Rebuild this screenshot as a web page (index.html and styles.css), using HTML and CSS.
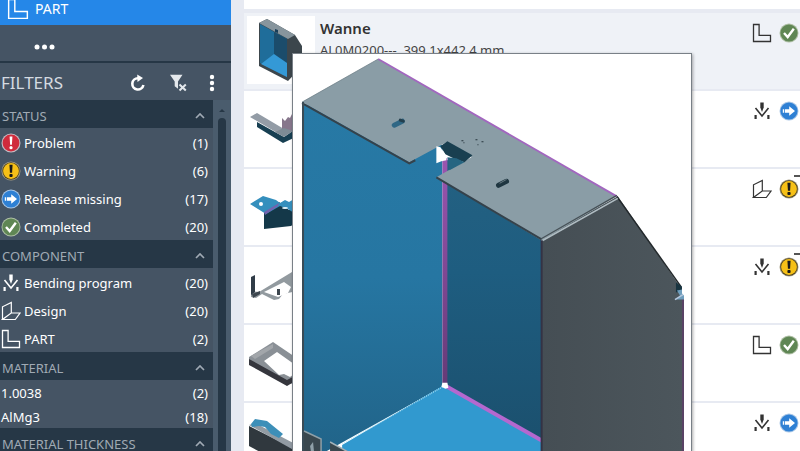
FILE: index.html
```html
<!DOCTYPE html>
<html lang="en">
<head>
<meta charset="utf-8">
<title>Parts</title>
<link rel="stylesheet" href="styles.css">
</head>
<body>
<svg class="defs" aria-hidden="true">
  <defs>
    <linearGradient id="g-left" x1="0" y1="0" x2="0" y2="1"><stop offset="0" stop-color="#2779a5"/><stop offset=".5" stop-color="#2676a2"/><stop offset="1" stop-color="#216489"/></linearGradient>
    <linearGradient id="g-back" x1="0" y1="0" x2="0" y2="1"><stop offset="0" stop-color="#246182"/><stop offset=".4" stop-color="#1e5d80"/><stop offset="1" stop-color="#1b506e"/></linearGradient>
    <linearGradient id="g-side" x1="0" y1="0" x2="1" y2="0"><stop offset="0" stop-color="#454e54"/><stop offset="1" stop-color="#4c565c"/></linearGradient>
    <linearGradient id="g-post" x1="0" y1="0" x2="0" y2="1"><stop offset="0" stop-color="#9a55b0"/><stop offset="1" stop-color="#653a77"/></linearGradient>
  </defs>
  <symbol id="problem" viewBox="0 0 20 20"><circle cx="10" cy="10" r="9.5" fill="#c4bcc4"/><circle cx="10" cy="10" r="8.4" fill="#d02b3c"/><path d="M8.6 3.5h2.8l-.5 8.2H9.100z" fill="#fff"/><circle cx="10" cy="14.700" r="1.600" fill="#fff"/></symbol>
  <symbol id="warning" viewBox="0 0 20 20"><circle cx="10" cy="10" r="9.500" fill="#a79f86"/><circle cx="10" cy="10" r="8.700" fill="#4a4020"/><circle cx="10" cy="10" r="7.900" fill="#f6c017"/><path d="M8.400 3.800h3.200l-.5 7.900H8.900z" fill="#191919"/><rect x="8.400" y="13" width="3.200" height="3" rx="1" fill="#191919"/></symbol>
  <symbol id="release" viewBox="0 0 20 20"><circle cx="10" cy="10" r="9.500" fill="#a9c6e6"/><circle cx="10" cy="10" r="8.600" fill="#2e80d4"/><path d="M3.800 8.300h1.200v3.400H3.800zM5.800 8.300h4.400V5.200l5.800 4.800-5.800 4.800v-3.100H5.800z" fill="#fff"/></symbol>
  <symbol id="completed" viewBox="0 0 20 20"><circle cx="10" cy="10" r="9.500" fill="#aebfa5"/><circle cx="10" cy="10" r="8.600" fill="#5f8654"/><path d="M5 10l3.700 4L14.800 5.800" fill="none" stroke="#fff" stroke-width="2.400"/></symbol>
  <symbol id="part" viewBox="0 0 20 20"><path d="M1.500 1.500h5.600v10.800h11.400v6.200h-17z" fill="none" stroke="currentColor" stroke-width="1.300"/></symbol>
  <symbol id="design" viewBox="0 0 20 20"><path d="M1.500 18.500V5.800L10.300 1.500V12L1.500 18.500h12.800L19 12h-8.700" fill="none" stroke="currentColor" stroke-width="1.200"/></symbol>
  <symbol id="bend" viewBox="0 0 20 20"><path d="M8.300 1.500h3.400v5L10 11 8.300 6.500z" fill="currentColor"/><path d="M3.500 7l6.500 8 6.500-8" fill="none" stroke="currentColor" stroke-width="1.600"/><path d="M2.500 14h2.200v4H2.500zM15.300 14h2.200v4h-2.200z" fill="currentColor"/></symbol>
  <symbol id="chevron" viewBox="0 0 10 6"><path d="M1 5l4-4 4 4" fill="none" stroke="currentColor" stroke-width="1.700"/></symbol>
</svg>

<div class="app">
  <aside class="sidebar">
    <button class="nav-item"><svg class="nav-icon"><use href="#part"/></svg>PART</button>
    <button class="more" aria-label="More"><svg width="22" height="6" viewBox="0 0 22 6" fill="#fff"><circle cx="3" cy="3" r="2.500"/><circle cx="10.500" cy="3" r="2.500"/><circle cx="18" cy="3" r="2.500"/></svg></button>
    <header class="filters-head">
      <h2>FILTERS</h2>
      <button aria-label="Reset"><svg width="18" height="18" viewBox="0 0 18 18"><path d="M9 4.300A5.600 5.600 0 1 0 14.400 11" fill="none" stroke="#fff" stroke-width="2.600"/><path d="M8.200.5l5.800 3.500-5.500 4z" fill="#fff"/></svg></button>
      <button aria-label="Clear filters"><svg width="18" height="18" viewBox="0 0 18 18"><path d="M1 .8h12.500L9 7.500v7.200l-3.300-2.500V7.500z" fill="#e4e8ec"/><path d="M10.500 10.500l6.300 6M16.800 10.500l-6.300 6" stroke="#e4e8ec" stroke-width="2"/></svg></button>
      <button aria-label="Options"><svg width="6" height="18" viewBox="0 0 6 18" fill="#fff"><circle cx="3" cy="3" r="2.200"/><circle cx="3" cy="9" r="2.200"/><circle cx="3" cy="15" r="2.200"/></svg></button>
    </header>
    <div class="filters-body">
      <div class="groups">
        <section>
          <button class="group-head">STATUS<svg><use href="#chevron"/></svg></button>
          <button class="row"><svg><use href="#problem"/></svg><span>Problem</span><span class="count">(1)</span></button>
          <button class="row"><svg><use href="#warning"/></svg><span>Warning</span><span class="count">(6)</span></button>
          <button class="row"><svg><use href="#release"/></svg><span>Release missing</span><span class="count">(17)</span></button>
          <button class="row"><svg><use href="#completed"/></svg><span>Completed</span><span class="count">(20)</span></button>
        </section>
        <section>
          <button class="group-head">COMPONENT<svg><use href="#chevron"/></svg></button>
          <button class="row"><svg><use href="#bend"/></svg><span>Bending program</span><span class="count">(20)</span></button>
          <button class="row"><svg><use href="#design"/></svg><span>Design</span><span class="count">(20)</span></button>
          <button class="row"><svg><use href="#part"/></svg><span>PART</span><span class="count">(2)</span></button>
        </section>
        <section>
          <button class="group-head">MATERIAL<svg><use href="#chevron"/></svg></button>
          <button class="row compact"><span>1.0038</span><span class="count">(2)</span></button>
          <button class="row compact"><span>AlMg3</span><span class="count">(18)</span></button>
        </section>
        <section>
          <button class="group-head">MATERIAL THICKNESS<svg><use href="#chevron"/></svg></button>
        </section>
      </div>
      <div class="scroll"><svg width="8" height="5" viewBox="0 0 8 5"><path d="M1 4l3-3 3 3z" fill="#263746"/></svg><div class="thumb"></div></div>
    </div>
  </aside>

  <main class="content">
    <ul class="list">
      <li class="card first"></li>
      <li class="card selected">
        <svg class="shot" viewBox="0 0 68 68"><rect width="68" height="68" fill="#fff"/><path d="M12 7l8-4 28 16 7 11v20l-14 15L12 50z" fill="#3c464c"/><path d="M12 7l8-4 28 16-7 4z" fill="#87959d"/><path d="M13 8l27 15v38L13 47z" fill="#1f6d9a"/><path d="M27 16l13 7v27l-13-9z" fill="#1b4c6b"/><path d="M14 48l13-10 13 9v14z" fill="#3499d6"/><path d="M28 13l3 1v3l-3-1z" fill="#183e5a"/></svg>
        <div class="info"><h3>Wanne</h3><p>AL0M0200---&nbsp; 399.1x442.4 mm</p></div>
        <span class="state"><svg><use href="#part"/></svg><svg><use href="#completed"/></svg></span>
      </li>
      <li class="card">
        <svg class="shot" viewBox="0 0 68 68"><path d="M10 28v5l26 16 17-8V32L37 43z" fill="#173f52"/><path d="M3 23l7-4 27 16-5 5z" fill="#939ca6"/><path d="M35 24l3 3 3-4 2 1 2-4 8-3v18l-12 4-6-3z" fill="#87778c"/><path d="M28 38l9-4 9 3-9 6z" fill="#7d8b95"/></svg>
        <div class="info"></div>
        <span class="state"><svg><use href="#bend"/></svg><svg><use href="#release"/></svg></span>
      </li>
      <li class="card">
        <svg class="shot" viewBox="0 0 68 68"><path d="M17 38l15-8 10 8h14v7l-12 9-27 3z" fill="#143849"/><path d="M3 32l13-8 13 4 4 3 5-3 4 2 5-3 10 4v9l-10 1-6-4-8-3-14 8z" fill="#348fbd"/><path d="M17 40l15-9-1 3-13 9z" fill="#7263ad"/><circle cx="14" cy="32" r="2" fill="#fff"/><ellipse cx="38" cy="36" rx="3" ry="1" fill="#e4f4fa"/></svg>
        <div class="info"></div>
        <span class="state flagged"><svg><use href="#design"/></svg><svg><use href="#warning"/></svg></span>
      </li>
      <li class="card">
        <svg class="shot" viewBox="0 0 68 68"><path d="M4 41l8 1L45 22l10 6v12L36 44l-4 5-5 1-12-6-6 4-5-1z" fill="#929a9f"/><path d="M4 27l4-2v17l-4 3z" fill="#303c47"/><path d="M17 42l20-10 7 5-3 6-10 4z" fill="#fff"/><path d="M30 39h3v6h-3zM5 44l8-3v3l-7 4z" fill="#3d464e"/></svg>
        <div class="info"></div>
        <span class="state flagged"><svg><use href="#bend"/></svg><svg><use href="#warning"/></svg></span>
      </li>
      <li class="card">
        <svg class="shot" viewBox="0 0 68 68"><path d="M2 29l24-15 31 21v18l-15 3L2 34z" fill="#8a9096"/><path d="M2 31l38 21 15-8v5l-15 9L2 37z" fill="#35363d"/><path d="M17 33l13-9 24 17-11 8-6-3-5 1z" fill="#fff"/><path d="M4 28l22-12v4L8 31z" fill="#a2a6aa"/></svg>
        <div class="info"></div>
        <span class="state"><svg><use href="#part"/></svg><svg><use href="#completed"/></svg></span>
      </li>
      <li class="card">
        <svg class="shot" viewBox="0 0 68 68"><path d="M2 20l50 25v22L2 40z" fill="#30383e"/><path d="M2 19l6-2 44 23v7z" fill="#929ba3"/><path d="M4 18l4-5 12 2 16 13-4 4-8-4-6-7-6-1-7 1z" fill="#3d8fb8"/></svg>
        <div class="info"></div>
        <span class="state"><svg><use href="#bend"/></svg><svg><use href="#release"/></svg></span>
      </li>
    </ul>

    <div class="preview">
      <svg viewBox="293 54 397 397" role="img" aria-label="Wanne preview">
        <path d="M302 103L442 145V386L325 451H302z" fill="url(#g-left)"/>
        <path d="M444 158l98 60v224L444 385z" fill="url(#g-back)"/>
        <path d="M444 384L342 444V451H542V439z" fill="#3199cf"/>
        <path d="M444 385L342 443" stroke="#bceafa" stroke-dasharray="1 1"/>
        <path d="M445 385L542 440" stroke="#b468cf" stroke-width="4"/>
        <path d="M442 158h5v226h-5z" fill="url(#g-post)"/>
        <path d="M442 382h5l1 5-3 1-4-2z" fill="#fff"/>
        <path d="M541 238L617 196L679 286L683 300V451H541z" fill="url(#g-side)"/>
        <path d="M616 196L680 286" stroke="#22282b" stroke-width="1.500"/>
        <path d="M541 238V451" stroke="#343345" stroke-width="2"/>
        <path d="M682 297V451" stroke="#594365" stroke-width="2"/>
        <path d="M302 102L378 59L616 196L541 240L436 177L471 157L446 142L409 162z" fill="#8a9da6"/>
        <path d="M378 59L616 196" stroke="#a267bf" stroke-width="1.800"/>
        <path d="M302 102L378 59" stroke="#687a82" stroke-width=".7"/>
        <path d="M302 103L409 163L415 160M436 177L541 239" fill="none" stroke="#35424b" stroke-width="2"/>
        <path d="M541 238L616 195" stroke="#475157" stroke-width="1.200"/><path d="M542 240L617 198" stroke="#b0bdc3" stroke-width="1.600"/>
        <path d="M303 102V451" stroke="#3b4b55" stroke-width="2"/>
        <path d="M440 146l7-5 25 14-8 7-9-3-10-5z" fill="#193f50"/>
        <path d="M447 157l9 1 8 4-15 8z" fill="#266581"/>
        <path d="M436 146l4 1 6 9v4l-5 1-5 2z" fill="#fff"/>
        <path d="M394 125l8-4" stroke="#2f6785" stroke-width="5" stroke-linecap="round"/><path d="M400 120l3 1" stroke="#243f4d" stroke-width="3" stroke-linecap="round"/>
        <path d="M498 185l8-4" stroke="#1f3641" stroke-width="5" stroke-linecap="round"/><path d="M499 183l7-4" stroke="#687b83" stroke-width="1"/>
        <path d="M461 140h2v1h-2zM475 139h2v1h-2zM481 141h2v1h-2zM477 144h1v1h-1zM463 142h1v1h-1z" fill="#26353d"/>
        <path d="M675 282l6 4v4l-6 2z" fill="#183440"/><path d="M676 290l5-1v4l2 2v4h-8l4-4z" fill="#6f9ebd"/><path d="M674 299l8-5" stroke="#b6c7dd" stroke-width="1.500"/>
        <path d="M304 430l17 8v13h-17z" fill="#39474e"/><path d="M304 430l17 8v13" fill="none" stroke="#8fa0a8" stroke-width="1.500"/><path d="M310 445l3-4 1 10h-3z" fill="#8fa0a8"/>
        <path d="M330 441l17 9v1h-17z" fill="#39474e"/><path d="M330 441l18 10" stroke="#a2b1b8" stroke-width="1.500"/>
      </svg>
    </div>
  </main>
</div>
</body>
</html>
```
FILE: styles.css
```css
* { box-sizing: border-box; }
body { margin: 0; font-family: "Noto Sans", "Open Sans", sans-serif; font-size: 13px; color: #fff; }
button { border: 0; margin: 0; padding: 0; background: none; color: inherit; font: inherit; text-align: left; display: flex; align-items: center; }
h2, h3, p, ul { margin: 0; padding: 0; font-weight: 400; }
.defs { position: absolute; width: 0; height: 0; }

.app { display: flex; height: 100vh; overflow: hidden; }
.sidebar { width: 231px; flex: none; display: flex; flex-direction: column; background: #455464; overflow: hidden; }
.nav-item { height: 25px; flex: none; padding: 0 0 8px 7px; gap: 6px; background: #2587e8; font-size: 14px; overflow: hidden; }
.nav-icon { width: 22px; height: 22px; flex: none; }
.more { height: 38px; flex: none; padding: 8px 0 0 34px; border-bottom: 2px solid #263746; }
.filters-head { display: flex; align-items: center; height: 37px; flex: none; padding: 2px 16px 0 1px; gap: 22px; }
.filters-head h2 { flex: 1; font-size: 17px; color: #d5dbe1; }
.filters-body { display: flex; flex: 1; min-height: 0; }
.groups { flex: 1; overflow: hidden; }
.group-head { width: 100%; height: 28px; padding: 4px 8px 0 2px; justify-content: space-between; background: #263746; color: #a0aab4; font-size: 13px; }
.group-head svg { width: 10px; height: 6px; }
.row { width: 100%; height: 28px; padding: 2px 5px 0 1px; gap: 3px; }
.row svg { width: 20px; height: 20px; flex: none; }
.row.compact { height: 24px; }
.count { margin-left: auto; }
.scroll { width: 18px; display: flex; flex-direction: column; align-items: center; gap: 5px; padding-top: 8px; background: #4a5c6d; }
.thumb { width: 8px; flex: 1; border-radius: 4px 4px 0 0; background: #263746; }

.content { position: relative; flex: 1; min-width: 0; overflow: hidden; padding-left: 13px; background: #e7eaf2; color: #333; }
.list { display: flex; flex-direction: column; gap: 2px; list-style: none; }
.card { display: flex; align-items: flex-start; height: 76px; flex: none; padding: 3px 1px 0 3px; background: #fff; }
.card.first { height: 9px; margin-bottom: 2px; }
.card.selected { background: #eff2f7; }
.shot { width: 68px; height: 68px; flex: none; }
.info { flex: 1; padding: 1px 0 0 5px; }
.info h3 { font-size: 15px; line-height: 22px; font-weight: 600; }
.info p { font-size: 13px; line-height: 22px; color: #444; }
.state { position: relative; display: flex; gap: 7px; padding-top: 7px; }
.state svg { width: 20px; height: 20px; }
.flagged::after { content: ""; position: absolute; top: 3px; right: -1px; width: 6px; height: 2px; background: #555; }
.preview { position: absolute; left: 61px; top: 53px; width: 400px; border: 1px solid #798087; border-bottom: 0; background: #fff; box-shadow: 1px 1px 3px #0005; }
.preview svg { display: block; width: 100%; }
```
